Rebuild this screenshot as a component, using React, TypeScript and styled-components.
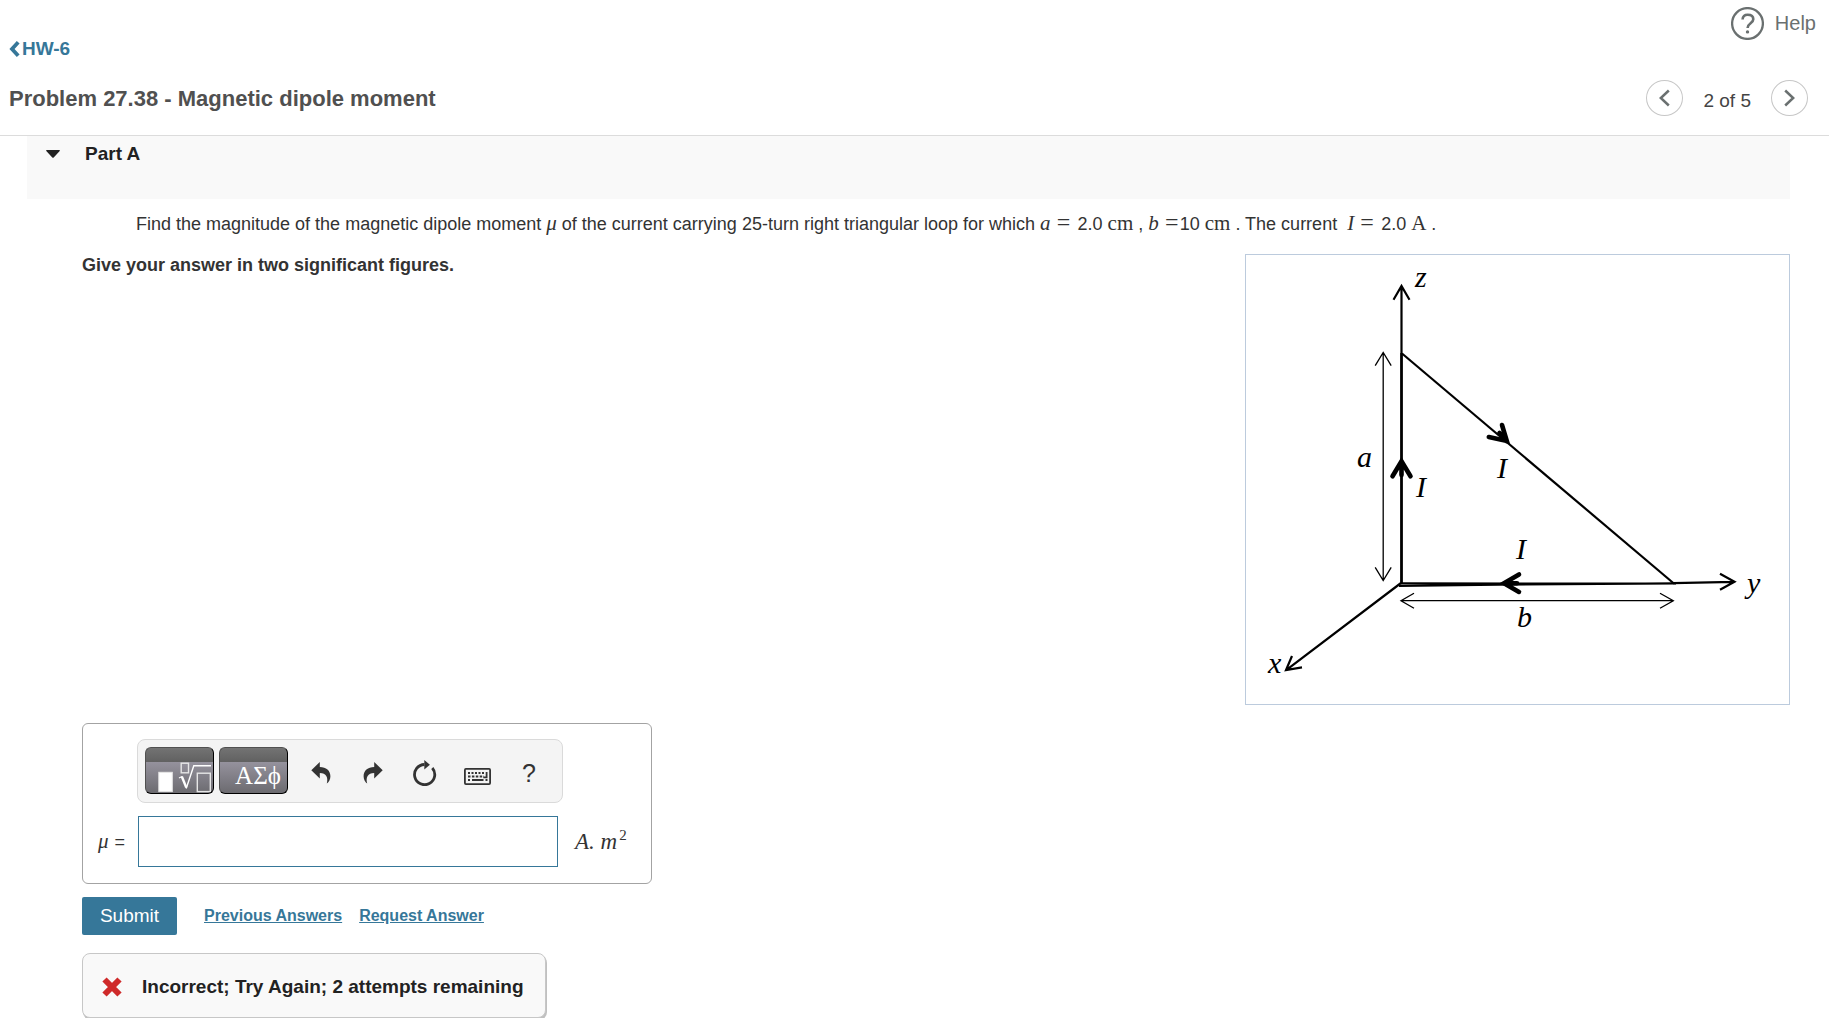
import React from "react";
import styled, { createGlobalStyle } from "styled-components";

const sans = '"Liberation Sans", Arial, sans-serif';
const serif = '"Liberation Serif", "Times New Roman", serif';
const teal = "#367799";

const GlobalStyle = createGlobalStyle`
  *, *::before, *::after { box-sizing: border-box; }
  body { margin: 0; background: #fff; color: #333; font-family: ${sans}; font-size: 18px; }
  p, h1, h2 { margin: 0; }
  button { font-family: inherit; cursor: pointer; }
  svg { display: block; }
`;

const Header = styled.header`
  display: flex;
  justify-content: space-between;
  padding: 0 12px 0 9px;
  border-bottom: 1px solid #dcdcdc;
`;

const Titles = styled.div`
  display: flex;
  flex-direction: column;
  align-items: flex-start;
  gap: 24px;
  padding: 37px 0 22px;
`;

const BackLink = styled.a`
  display: flex;
  align-items: center;
  gap: 2px;
  color: ${teal};
  font-size: 19px;
  font-weight: bold;
  line-height: 24px;
  text-decoration: none;
`;

const Title = styled.h1`
  color: #505050;
  font-size: 22px;
  line-height: 28px;
`;

const Tools = styled.div`
  display: flex;
  flex-direction: column;
  align-items: flex-end;
  gap: 40px;
  padding: 6px 0 19px;
`;

const HelpButton = styled.button`
  display: flex;
  align-items: center;
  gap: 11px;
  padding: 0 1px 0 0;
  border: 0;
  background: none;
  color: #6a7070;
  font-size: 20px;
  line-height: 34px;
`;

const Pager = styled.nav`
  display: flex;
  align-items: center;
  gap: 20px;
  margin-right: 9px;
`;

const PagerButton = styled.button`
  display: flex;
  align-items: center;
  justify-content: center;
  width: 37px;
  height: 36px;
  padding: 0;
  border: 1px solid #c7c7c7;
  border-radius: 50%;
  background: #fff;
  color: #6a7070;
`;

const PagerText = styled.span`
  padding-top: 5px;
  color: #444;
  font-size: 19px;
  line-height: 24px;
`;

const Main = styled.main`
  padding: 0 39px 0 27px;
`;

const PartHeader = styled.h2`
  height: 63px;
  padding: 6px 19px;
  background: #f9f9f9;
`;

const PartToggle = styled.button`
  display: flex;
  align-items: center;
  gap: 25px;
  padding: 0;
  border: 0;
  background: none;
  color: #222;
  font-size: 19px;
  font-weight: bold;
  line-height: 24px;
`;

const PartBody = styled.div`
  display: flex;
  flex-direction: column;
  padding: 9px 0 0 55px;
`;

const Question = styled.p`
  padding-left: 54px;
  line-height: 32px;
`;

const Var = styled.i`
  font-family: ${serif};
  font-size: 21px;
  line-height: 1;
`;

const Unit = styled.span`
  font-family: ${serif};
  font-size: 21px;
  line-height: 1;
`;

const Equals = styled.span<{ $tight?: boolean }>`
  display: inline-block;
  width: 16px;
  margin: 0 ${(p) => (p.$tight ? 0 : 6)}px 0 5px;
  font-family: ${serif};
  font-size: 24px;
  line-height: 1;
  text-align: center;
`;

const Work = styled.div`
  display: flex;
  align-items: flex-start;
  justify-content: space-between;
  margin-top: 14px;
`;

const Instruction = styled.p`
  font-weight: bold;
  line-height: 22px;
`;

const Figure = styled.figure`
  flex: none;
  margin: 0;
  border: 1px solid #bccbdd;
  background: #fff;

  text {
    fill: #000;
    font-family: ${serif};
    font-style: italic;
    font-size: 30px;
  }
`;

const AnswerForm = styled.form`
  display: flex;
  flex-direction: column;
  align-items: flex-start;
  margin-top: 18px;
`;

const AnswerBox = styled.div`
  display: grid;
  grid-template-columns: 40px 421px auto;
  row-gap: 13px;
  align-items: center;
  width: 570px;
  max-width: 100%;
  padding: 15px 14px 16px;
  border: 1px solid #a3a3a3;
  border-radius: 6px;
`;

const Toolbar = styled.div`
  display: flex;
  grid-column: 2 / -1;
  align-items: flex-start;
  justify-self: start;
  width: 426px;
  height: 64px;
  padding: 7px;
  border: 1px solid #dadada;
  border-radius: 8px;
  background: #f4f4f4;
`;

const Keypads = styled.div`
  display: flex;
  gap: 5px;
  margin-right: 7px;
`;

const KeypadButton = styled.button`
  width: 69px;
  height: 47px;
  padding: 0;
  overflow: hidden;
  border: 1px solid #000;
  border-top-color: #505050;
  border-left-color: #505050;
  border-radius: 6px;
  background: linear-gradient(#737373 0, #616161 14px, #95929d 14px, #6c6b70 100%);
  color: #fff;
`;

const GreekLabel = styled.span`
  display: block;
  padding: 11px 0 0 9px;
  font-family: ${serif};
  font-size: 25px;
  line-height: 32px;
`;

const IconButton = styled.button`
  display: flex;
  align-items: center;
  justify-content: center;
  width: 52px;
  height: 47px;
  padding: 5px 0 0;
  border: 0;
  background: none;
  color: #333;
  font-size: 25px;
`;

const AnswerLabel = styled.label`
  display: flex;
  align-items: baseline;
  gap: 6px;
  padding-left: 1px;
  font-size: 18px;
  line-height: 24px;
`;

const AnswerInput = styled.input`
  width: 420px;
  height: 51px;
  margin-left: 1px;
  padding: 0 10px;
  border: 1px solid ${teal};
  border-radius: 0;
  outline: none;
  font-family: ${serif};
  font-size: 21px;
`;

const AnswerUnit = styled.span`
  padding-left: 17px;
  font-family: ${serif};
  font-size: 23px;
  font-style: italic;
  line-height: 24px;
  white-space: nowrap;

  sup {
    margin-left: 2px;
    font-size: 15px;
    font-style: normal;
    line-height: 0;
  }
`;

const Actions = styled.div`
  display: flex;
  align-items: center;
  gap: 17px;
  margin-top: 13px;
`;

const Submit = styled.button`
  width: 95px;
  height: 38px;
  margin-right: 10px;
  padding: 0;
  border: 0;
  border-radius: 2px;
  background: ${teal};
  color: #fff;
  font-size: 19px;
`;

const TextLink = styled.a`
  color: ${teal};
  font-size: 16px;
  font-weight: bold;
  line-height: 24px;
`;

const Feedback = styled.div`
  display: flex;
  align-items: center;
  gap: 20px;
  height: 65px;
  margin-top: 18px;
  padding: 3px 21px 0 19px;
  border: 1px solid #c7c7c7;
  border-radius: 8px;
  background: #f9f9f9;
  box-shadow: 1px 2px 0 #c0c0c0;
  color: #222;
  font-size: 19px;
  font-weight: bold;
  line-height: 24px;
`;

const Chevron = ({ flip }: { flip?: boolean }) => (
  <svg width="11" height="18" viewBox="0 0 11 18" fill="none" stroke="currentColor" strokeWidth="2.5" aria-hidden="true">
    <path d={flip ? "M1.2 1.5 9.2 9l-8 7.5" : "M9.8 1.5 1.8 9l8 7.5"} />
  </svg>
);

const HelpIcon = () => (
  <svg width="33" height="33" viewBox="0 0 33 33" fill="none" stroke="currentColor" aria-hidden="true">
    <circle cx="16.5" cy="16.5" r="15.4" strokeWidth="2.3" />
    <path d="M11.6 12.6c0-3.4 2-4.8 5-4.8 3.6 0 5.7 1.8 5.7 4.5 0 4-5.7 4-5.7 8.6" strokeWidth="2.6" />
    <circle cx="16.5" cy="24.9" r="1.7" fill="currentColor" stroke="none" />
  </svg>
);

const CurvedArrow = ({ flip }: { flip?: boolean }) => (
  <svg width="20" height="22" viewBox="0 0 20 22" fill="currentColor" aria-hidden="true">
    <path
      transform={flip ? "matrix(-1 0 0 1 20 0)" : undefined}
      d="M.3 8.2 8.8 0v5c6.4 0 10.6 3.6 10.6 9.2 0 3.2-1.400 5.900-3.600 7.300 1.600-6.300-.6-10.200-7-10.400v5.500z"
    />
  </svg>
);

const ResetIcon = () => (
  <svg width="24" height="26" viewBox="0 0 24 26" aria-hidden="true">
    <path d="M19.300 8a10.100 10.100 0 1 1-7.800-3.500" fill="none" stroke="currentColor" strokeWidth="2.8" />
    <path d="M11.300 0l5.600 4.800-5.600 4.700z" fill="currentColor" />
  </svg>
);

const KeyboardIcon = () => (
  <svg width="27" height="23" viewBox="0 -6 27 23" fill="none" stroke="currentColor" aria-hidden="true">
    <rect x=".9" y=".9" width="25.2" height="15.2" rx="1" strokeWidth="1.8" />
    <path d="M4 5h17" strokeWidth="1.8" strokeDasharray="2 1.5" />
    <path d="M4 8.5h16" strokeWidth="1.8" strokeDasharray="2.5 1.4" />
    <path d="M22.6 4v5.3h-3.3" strokeWidth="1.8" />
    <path d="M4 12h2M8 12h11.5M21.5 12h2" strokeWidth="1.8" />
  </svg>
);

const RootIcon = () => (
  <svg width="67" height="45" viewBox="1 1 67 45" fill="none" stroke="#e6e6e6" aria-hidden="true">
    <rect x="13.8" y="25.3" width="13.5" height="19.3" fill="#fff" />
    <rect x="36.2" y="16.2" width="7.3" height="9.6" strokeWidth="1.4" />
    <path d="M34 31l3-1.5" stroke="#fff" strokeWidth="1.2" />
    <path d="M36.8 29.5l4.5 11" stroke="#fff" strokeWidth="2.4" />
    <path d="M41.2 41.5l7.600-22.800H66" stroke="#fff" strokeWidth="1.4" />
    <rect x="52.3" y="26.2" width="13" height="18.4" strokeWidth="1.4" />
  </svg>
);

const LoopDiagram = () => (
  <svg width="543" height="449" viewBox="1 1 543 449" fill="none" stroke="#000" strokeWidth="2.2" role="img" aria-label="Right triangular current loop in the y-z plane">
    <path d="M156.500 32v67M148.500 45.700l8-13.700 8 13.700" />
    <path d="M156.500 99v231" strokeWidth="2.8" />
    <path d="M157 99.500l271.300 229.500" />
    <path d="M156 329.300l272 .4M154 332l100-1.300L431 329.300" />
    <path d="M428 329.200l61-1.400M475 319.700l14.500 8-14.500 8" />
    <path d="M156 329L41.500 415.800M47 402l-6 14 16-2.600" />
    <g strokeWidth="1.3">
      <path d="M138.200 98.500v228M130.200 111.700l8-13.200 8 13.200M130.200 313.300l8 13.200 8-13.200" />
      <path d="M156 346.700h272M169 339.200l-13 7.500 13 7.500M415 339.200l13.300 7.500-13.300 7.500" />
    </g>
    <g strokeWidth="4.6" strokeLinecap="round">
      <path d="M147.500 222.300l9-15 9 15M156.500 210v11" />
      <path d="M257 171l4.800 16-18-4M254.500 179l7 8" />
      <path d="M274 320.500l-15 8.700 15 8.700M260 329.200h12" />
    </g>
    <g stroke="none">
      <text x="170" y="33">z</text>
      <text x="23" y="419">x</text>
      <text x="502" y="339">y</text>
      <text x="112" y="213">a</text>
      <text x="272" y="373">b</text>
      <text x="171" y="243">I</text>
      <text x="252" y="224">I</text>
      <text x="271" y="305">I</text>
    </g>
  </svg>
);

export default function App() {
  return (
    <>
      <GlobalStyle />
      <Header>
        <Titles>
          <BackLink href="#hw-6">
            <svg width="11" height="16" viewBox="0 0 11 16" fill="none" stroke="currentColor" strokeWidth="3.8" aria-hidden="true">
              <path d="M9.2 1.3 3 8l6.200 6.700" />
            </svg>
            HW-6
          </BackLink>
          <Title>Problem 27.38 - Magnetic dipole moment</Title>
        </Titles>
        <Tools>
          <HelpButton type="button">
            <HelpIcon />
            Help
          </HelpButton>
          <Pager aria-label="Problems">
            <PagerButton type="button" aria-label="Previous problem">
              <Chevron />
            </PagerButton>
            <PagerText>2 of 5</PagerText>
            <PagerButton type="button" aria-label="Next problem">
              <Chevron flip />
            </PagerButton>
          </Pager>
        </Tools>
      </Header>
      <Main>
        <PartHeader>
          <PartToggle type="button" aria-expanded="true">
            <svg width="14" height="8" viewBox="0 0 14 8" fill="currentColor" aria-hidden="true">
              <path d="M.5 0h13q.7.500 0 1.200L7.700 7.500q-.7.700-1.400 0L.5 1.200Q-.2.500.5 0z" />
            </svg>
            Part A
          </PartToggle>
        </PartHeader>
        <PartBody>
          <Question>
            Find the magnitude of the magnetic dipole moment <Var>μ</Var> of the current carrying 25-turn right
            triangular loop for which <Var>a</Var>
            <Equals>=</Equals>2.0 <Unit>cm</Unit> , <Var>b</Var>
            <Equals $tight>=</Equals>10 <Unit>cm</Unit> . The current&nbsp; <Var>I</Var>
            <Equals>=</Equals>2.0 <Unit>A</Unit> .
          </Question>
          <Work>
            <Instruction>Give your answer in two significant figures.</Instruction>
            <Figure>
              <LoopDiagram />
            </Figure>
          </Work>
          <AnswerForm onSubmit={(e) => e.preventDefault()}>
            <AnswerBox>
              <Toolbar role="toolbar" aria-label="Equation editor">
                <Keypads>
                  <KeypadButton type="button" aria-label="Templates">
                    <RootIcon />
                  </KeypadButton>
                  <KeypadButton type="button">
                    <GreekLabel>ΑΣϕ</GreekLabel>
                  </KeypadButton>
                </Keypads>
                <IconButton type="button" aria-label="Undo">
                  <CurvedArrow />
                </IconButton>
                <IconButton type="button" aria-label="Redo">
                  <CurvedArrow flip />
                </IconButton>
                <IconButton type="button" aria-label="Reset">
                  <ResetIcon />
                </IconButton>
                <IconButton type="button" aria-label="Keyboard shortcuts">
                  <KeyboardIcon />
                </IconButton>
                <IconButton type="button">?</IconButton>
              </Toolbar>
              <AnswerLabel htmlFor="answer">
                <Var>μ</Var>=
              </AnswerLabel>
              <AnswerInput id="answer" type="text" autoComplete="off" />
              <AnswerUnit>
                A. m<sup>2</sup>
              </AnswerUnit>
            </AnswerBox>
            <Actions>
              <Submit type="submit">Submit</Submit>
              <TextLink href="#previous">Previous Answers</TextLink>
              <TextLink href="#request">Request Answer</TextLink>
            </Actions>
            <Feedback role="status">
              <svg width="20" height="20" viewBox="0 0 20 20" fill="none" stroke="#cf2a2a" strokeWidth="6" aria-hidden="true">
                <path d="M2.500 2.500l15 15M17.500 2.500l-15 15" strokeLinejoin="round" />
              </svg>
              Incorrect; Try Again; 2 attempts remaining
            </Feedback>
          </AnswerForm>
        </PartBody>
      </Main>
    </>
  );
}
